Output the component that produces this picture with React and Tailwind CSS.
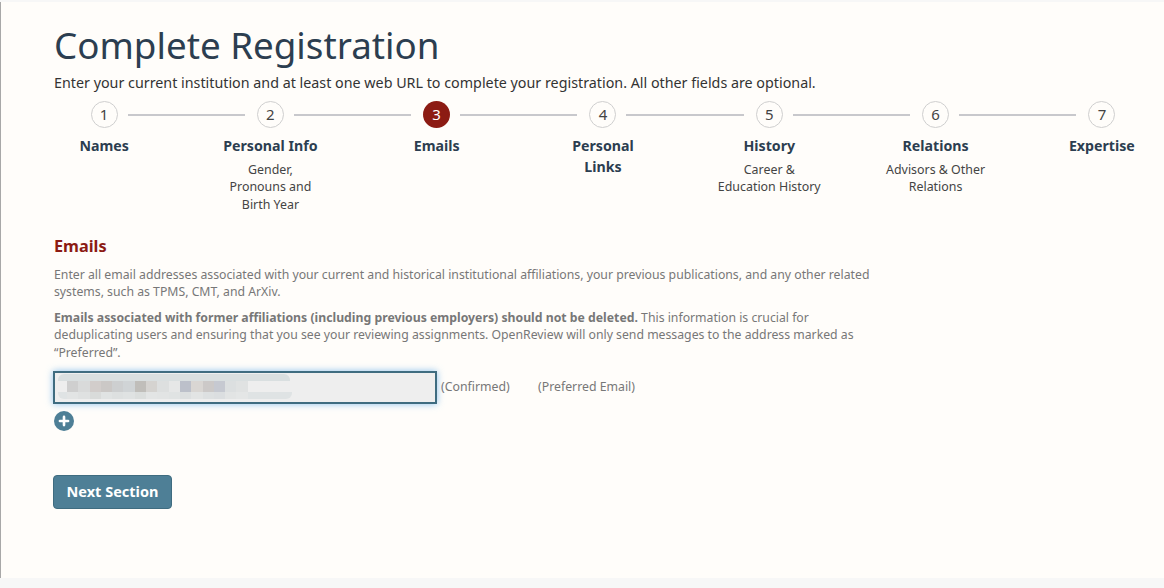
import { Plus } from 'lucide-react';

const steps = [
  { n: 1, title: 'Names' },
  { n: 2, title: 'Personal Info', sub: ['Gender,', 'Pronouns and', 'Birth Year'] },
  { n: 3, title: 'Emails', active: true },
  { n: 4, title: ['Personal', 'Links'] },
  { n: 5, title: 'History', sub: ['Career &', 'Education History'] },
  { n: 6, title: 'Relations', sub: ['Advisors & Other', 'Relations'] },
  { n: 7, title: 'Expertise' },
];

// pixelated blur over the email address
const blocks = ['#cfcfcf', '#d9dada', '#d2cdcb', '#cbc8c6', '#cdcfd0', '#d0d4d6', '#c0beba', '#d5d3d0', '#dddfdf', '#e6e7e7', '#bcc0ca', '#d9d6d3', '#ccc9c8', '#c6c9d1', '#dcdfe0', '#e0e2e2'];
const lowerBlocks = ['#e2e4e4', '#dfe1e1', '#d9dbda', '#e0e3e3', '#dde0e0', '#dfe2e2', '#dbdedd', '#e3e5e5', '#e2e4e4', '#e0e3e3', '#dcdfe0', '#e2e4e4', '#dde0e1', '#dbdee0', '#e2e4e4', '#e4e6e6'];

export default function App() {
  return (
    <div className="h-[588px] overflow-hidden bg-[#f7f7f7] pt-[2px] text-[#333f4d]" style={{ fontFamily: '"Noto Sans", sans-serif' }}>
      <div className="h-[576px] border-l border-[#a8a8a8] bg-[#fffdfa] pl-[53px]">
        <h1 className="pt-[18px] text-[36.75px] leading-[50px] text-[#2c3e50]">Complete Registration</h1>
        <p className="mt-[3px] text-[14.3px] leading-[20px] text-[#333]">
          Enter your current institution and at least one web URL to complete your registration. All other fields are optional.
        </p>

        {/* Stepper */}
        <div className="mt-[8px] ml-[36.5px] flex w-[1025px] items-center">
          {steps.map((s, i) => (
            <div key={s.n} className={i < 6 ? 'flex flex-1 items-center' : 'flex items-center'}>
              <div className={s.active
                ? 'flex h-[27px] w-[27px] items-center justify-center rounded-full bg-[#8c1b13] text-[15px] text-white'
                : 'flex h-[27px] w-[27px] items-center justify-center rounded-full border border-[#cfcfcf] text-[15px] text-[#444]'}>
                {s.n}
              </div>
              {i < 6 && <div className="ml-[10px] mr-[12px] h-[2px] flex-1 bg-[#c8c8cc]" />}
            </div>
          ))}
        </div>
        <div className="ml-[-33px] grid w-[1164px] grid-cols-7 pt-[8px]">
          {steps.map((s) => (
            <div key={s.n} className="text-center">
              <div className="text-[14.2px] font-bold leading-[20.6px] text-[#2c3e50]">
                {Array.isArray(s.title) ? s.title.map((t) => <div key={t}>{t}</div>) : s.title}
              </div>
              {s.sub && (
                <div className="mt-[4.1px] text-[12.4px] leading-[17.5px] text-[#444]">
                  {s.sub.map((t) => <div key={t}>{t}</div>)}
                </div>
              )}
            </div>
          ))}
        </div>

        {/* Emails section */}
        <h2 className="mt-[21.8px] text-[16.3px] font-bold leading-[22px] text-[#8c1b13]">Emails</h2>
        <div className="mt-[9px] w-[830px] text-[12.25px] leading-[17.5px] text-[#777]">
          <p>
            Enter all email addresses associated with your current and historical institutional affiliations, your previous publications, and any other related systems, such as TPMS, CMT, and ArXiv.
          </p>
          <p className="mt-[8px]">
            <b className="font-bold">Emails associated with former affiliations (including previous employers) should not be deleted.</b>{' '}
            This information is crucial for deduplicating users and ensuring that you see your reviewing assignments. OpenReview will only send messages to the address marked as “Preferred”.
          </p>
        </div>

        <div className="mt-[9.5px] ml-[-1px] flex items-center text-[12.3px] text-[#777]">
          <div className="relative h-[33px] w-[384px] overflow-hidden border-2 border-[#3f6c80] bg-[#eeeeee] shadow-[0_0_7px_rgba(102,175,233,0.75)]">
            <div className="absolute left-[3px] top-[1px] h-[7px] w-[232px] rounded-t-[6px] bg-[#d9dfe0]" />
            <div className="absolute left-[12px] top-[8px] flex h-[11px]">
              {blocks.map((c, i) => <div key={i} className="h-full w-[11.3px]" style={{ background: c }} />)}
            </div>
            <div className="absolute left-[3px] top-[19px] flex h-[7px] w-[234px] overflow-hidden rounded-b-[6px] bg-[#dfe3e4] pl-[9px]">
              {lowerBlocks.map((c, i) => <div key={i} className="h-full w-[11.3px] shrink-0" style={{ background: c }} />)}
            </div>
          </div>
          <span className="ml-[4px] w-[97px]">(Confirmed)</span>
          <span>(Preferred Email)</span>
        </div>

        <div className="mt-[7px] flex h-[20px] w-[20px] items-center justify-center rounded-full bg-[#4e7f96]">
          <Plus className="h-[14px] w-[14px] text-white" strokeWidth={4.5} />
        </div>

        <button className="mt-[44px] ml-[-1px] block h-[34px] w-[119px] rounded-[4px] border border-[#3f6c80] bg-[#4e7f96] text-[14.5px] font-bold text-white">
          Next Section
        </button>
      </div>
    </div>
  );
}
